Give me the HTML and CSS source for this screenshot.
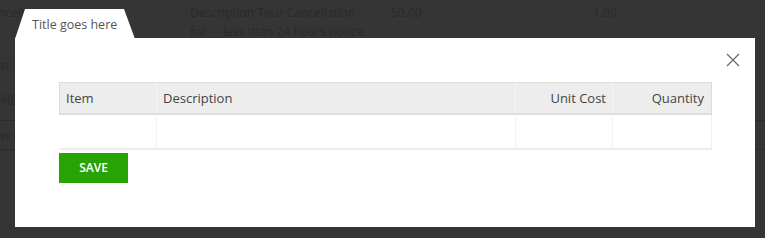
FILE: index.html
```html
<!DOCTYPE html>
<html lang="en">
<head>
    <meta charset="UTF-8">
    <title>Invoice items</title>
    <link rel="stylesheet" href="styles.css">
</head>
<body>
    <!-- page behind the overlay -->
    <div class="page">
        <div class="page-row row-1">
            <div class="cell lead">Cancellation</div>
            <div class="cell">Description:Tour Cancellation<br>for - - less than 24 hours notice</div>
            <div class="cell">50.00</div>
            <div class="cell">1.00</div>
        </div>
        <div class="page-row row-2">
            <div class="cell lead">Cost</div>
        </div>
        <div class="page-row row-3">
            <div class="cell lead">hajgl</div>
        </div>
        <div class="page-row row-4">
            <div class="cell lead">New item</div>
        </div>
    </div>

    <!-- dialog -->
    <div class="modal">
        <div class="modal-tab">Title goes here</div>
        <button class="modal-close" title="Close">
            <svg width="14" height="14" viewBox="0 0 14 14">
                <path d="M1 1 L13 13 M13 1 L1 13" stroke="#6b6b6b" stroke-width="1.3" fill="none"/>
            </svg>
        </button>

        <table class="items">
            <thead>
                <tr>
                    <th class="col-item">Item</th>
                    <th class="col-desc">Description</th>
                    <th class="col-num">Unit Cost</th>
                    <th class="col-num col-qty">Quantity</th>
                </tr>
            </thead>
            <tbody>
                <tr>
                    <td></td>
                    <td></td>
                    <td></td>
                    <td></td>
                </tr>
            </tbody>
        </table>

        <button class="btn-save">SAVE</button>
    </div>
</body>
</html>
```

FILE: styles.css
```css
* {
    box-sizing: border-box;
}

body {
    margin: 0;
    width: 765px;
    height: 238px;
    overflow: hidden;
    background: #353535;
    font-family: "Open Sans", "Noto Sans", sans-serif;
}

/* 背景页面 */
.page {
    color: #2a2a2a;
    font-size: 12px;
    line-height: 19px;
}
.page-row {
    display: grid;
    grid-template-columns: 190px 201px 202px 1fr;
}
.page .cell {
    white-space: nowrap;
}
.row-1 { height: 50px; padding-top: 3px; }
.row-2 { height: 32px; padding-top: 6px; }
.row-3 { height: 38px; padding-top: 6px; }
.row-4 {
    height: 30px;
    padding-top: 5px;
    border-top: 1px solid #2c2c2c;
    border-bottom: 1px solid #2c2c2c;
}
.row-1 .lead { text-indent: -16px; }
.row-2 .lead { text-indent: -15px; }
.row-3 .lead { text-indent: -7px; }
.row-4 .lead { text-indent: -15px; }

/* 弹窗 */
.modal {
    position: fixed;
    left: 15px;
    top: 38px;
    width: 740px;
    height: 189px;
    background: #fff;
    padding: 44px 44px 0;
}
.modal-tab {
    position: absolute;
    left: 0;
    top: -29px;
    width: 120px;
    height: 30px;
    background: #fff;
    clip-path: polygon(10px 0, 109px 0, 120px 100%, 0 100%);
    color: #555;
    font-size: 12.5px;
    padding: 7px 0 0 17px;
}
.modal-close {
    position: absolute;
    right: 15px;
    top: 15px;
    width: 14px;
    height: 14px;
    padding: 0;
    border: none;
    background: none;
    cursor: pointer;
}
.modal-close svg {
    display: block;
}

/* 表格 */
.items {
    width: 100%;
    table-layout: fixed;
    border-collapse: collapse;
    font-size: 13px;
    color: #444;
}
.items th {
    background: #ededed;
    font-weight: normal;
    text-align: left;
    height: 31px;
    padding: 0 6px;
    border-top: 1px solid #dcdcdc;
    border-bottom: 2px solid #dedede;
    border-left: 1px dotted #fff;
}
.items th:first-child {
    border-left: 1px solid #dcdcdc;
}
.items th:last-child {
    border-right: 1px solid #dcdcdc;
    padding-right: 7px;
}
.items .col-item { width: 97px; }
.items .col-desc { width: 359px; }
.items .col-num {
    width: 97px;
    text-align: right;
}
.items .col-qty { width: 99px; }
.items td {
    height: 35px;
    border-left: 1px dotted #e2e2e2;
    border-bottom: 2px solid #ececec;
}
.items td:first-child {
    border-left: none;
}
.items td:last-child {
    border-right: 1px dotted #e2e2e2;
}

/* 按钮 */
.btn-save {
    margin-top: 3px;
    width: 69px;
    height: 30px;
    border: none;
    background: #28a304;
    color: #fff;
    font-family: "Open Sans", "Noto Sans", sans-serif;
    font-size: 12px;
    font-weight: 600;
    cursor: pointer;
}
```
